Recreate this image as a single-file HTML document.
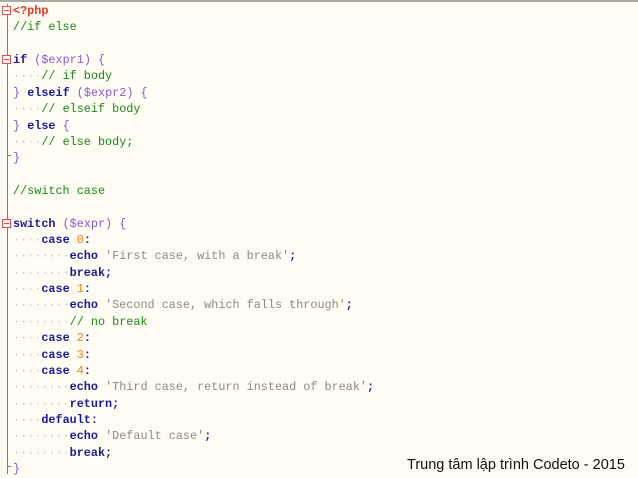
<!DOCTYPE html>
<html><head><meta charset="utf-8"><style>
html,body{margin:0;padding:0;width:638px;height:478px;overflow:hidden;background:#fefcf3;}
.top{position:absolute;left:0;top:0;width:638px;height:2px;background:#a9a9a9;}
.rl{position:absolute;left:7px;top:4px;width:1px;height:470px;background:#e05050;}
.box{position:absolute;left:2px;width:9px;height:9px;border:1px solid #e05050;box-sizing:border-box;background:#fefcf3;}
.box:after{content:"";position:absolute;left:1px;top:3px;width:5px;height:1px;background:#e05050;}
.end{position:absolute;left:7px;width:4px;height:1px;background:#e05050;}
pre{position:absolute;left:13px;top:3px;margin:0;font-family:"Liberation Mono",monospace;font-size:11.8px;line-height:16.36px;color:#222;}
.k{color:#1a1a9a;font-weight:bold}
.p{color:#8a5ad0}
.c{color:#188a18}
.s{color:#8a8a8a}
.n{color:#f08020}
.t{color:#e03a2a;font-weight:bold}
.w{color:#c8c8c8}
.foot{position:absolute;left:407px;top:457px;font-family:"Liberation Sans",sans-serif;font-size:14.5px;color:#111;}
</style></head><body>
<div class="top"></div>
<div class="rl"></div>
<div class="box" style="top:6px"></div>
<div class="box" style="top:55px"></div>
<div class="box" style="top:219px"></div>
<div class="end" style="top:155px"></div>
<div class="end" style="top:466px"></div>
<pre><span class="t">&lt;?php</span>
<span class="c">//if else</span>

<span class="k">if</span> <span class="p">($expr1) {</span>
<span class="w">····</span><span class="c">// if body</span>
<span class="p">}</span> <span class="k">elseif</span> <span class="p">($expr2) {</span>
<span class="w">····</span><span class="c">// elseif body</span>
<span class="p">}</span> <span class="k">else</span> <span class="p">{</span>
<span class="w">····</span><span class="c">// else body;</span>
<span class="p">}</span>

<span class="c">//switch case</span>

<span class="k">switch</span> <span class="p">($expr) {</span>
<span class="w">····</span><span class="k">case</span> <span class="n">0</span><span class="k">:</span>
<span class="w">········</span><span class="k">echo</span> <span class="s">'First case, with a break'</span><span class="k">;</span>
<span class="w">········</span><span class="k">break;</span>
<span class="w">····</span><span class="k">case</span> <span class="n">1</span><span class="k">:</span>
<span class="w">········</span><span class="k">echo</span> <span class="s">'Second case, which falls through'</span><span class="k">;</span>
<span class="w">········</span><span class="c">// no break</span>
<span class="w">····</span><span class="k">case</span> <span class="n">2</span><span class="k">:</span>
<span class="w">····</span><span class="k">case</span> <span class="n">3</span><span class="k">:</span>
<span class="w">····</span><span class="k">case</span> <span class="n">4</span><span class="k">:</span>
<span class="w">········</span><span class="k">echo</span> <span class="s">'Third case, return instead of break'</span><span class="k">;</span>
<span class="w">········</span><span class="k">return;</span>
<span class="w">····</span><span class="k">default:</span>
<span class="w">········</span><span class="k">echo</span> <span class="s">'Default case'</span><span class="k">;</span>
<span class="w">········</span><span class="k">break;</span>
<span class="p">}</span></pre>
<div class="foot">Trung tâm lập trình Codeto - 2015</div>
</body></html>
